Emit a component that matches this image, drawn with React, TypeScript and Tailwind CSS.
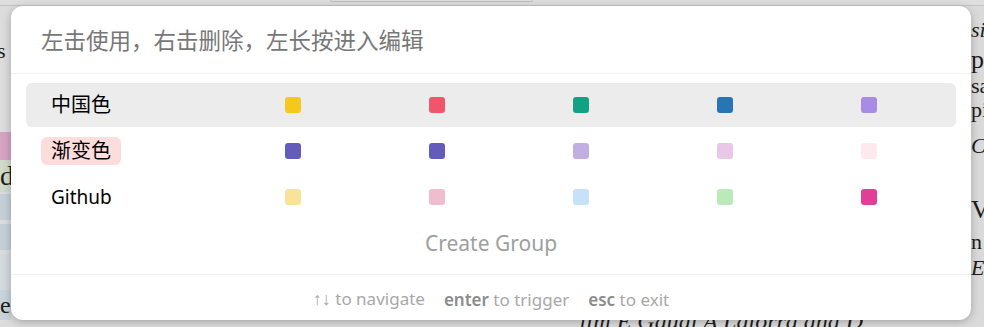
import React from "react";

const rows: { label: string; badge?: boolean; active?: boolean; latin?: boolean; colors: string[] }[] = [
  { label: "中国色", active: true, colors: ["#f4c91b", "#ef566a", "#12a283", "#2775b5", "#a78be4"] },
  { label: "渐变色", badge: true, colors: ["#645cbb", "#645cbb", "#c1afe3", "#ebc7e7", "#fde9ee"] },
  { label: "Github", latin: true, colors: ["#f9e29a", "#f0bdcf", "#c5e2f8", "#baeab7", "#e13f97"] },
];

function Swatch({ color }: { color: string }) {
  return <div className="h-4 w-4 rounded-[3px]" style={{ backgroundColor: color }} />;
}

export default function App() {
  return (
    <div className="relative h-[327px] w-[984px] overflow-hidden bg-[#dcdcdc] font-['Liberation_Serif',serif] text-[#1c1c1c]">
      {/* dimmed document behind */}
      <div className="flex h-[6px] border-b border-[#c4c4c4] bg-[#dedede]">
        <div className="ml-[330px] h-[2px] w-[203px] rounded-b-[4px] border border-t-0 border-[#bdbdbd]" />
      </div>
      <div className="flex h-[321px]">
        <div className="flex w-[11px] flex-col overflow-hidden text-[22px] leading-none">
          <div className="h-[34px] shrink-0" />
          <div className="h-[22px] shrink-0 -ml-[3px]">s</div>
          <div className="h-[70px] shrink-0" />
          <div className="h-[28px] shrink-0 bg-[#d7a3c3]" />
          <div className="h-[32px] shrink-0 bg-[#cfdacb] text-[28px] leading-[32px]">d</div>
          <div className="mt-[2px] h-[26px] shrink-0 bg-[#c4cfd9]" />
          <div className="mt-[4px] h-[26px] shrink-0 bg-[#c4cfd9]" />
          <div className="mt-[4px] h-[36px] shrink-0 bg-[#d2d9df]" />
          <div className="h-[30px] shrink-0 bg-[#c8d3dc] text-[24px] leading-[30px]">e</div>
        </div>
        <div className="flex-1" />
        <div className="flex w-[13px] flex-col overflow-hidden bg-[#dadada] text-[22px] leading-none">
          <div className="h-[13px] shrink-0" />
          <div className="h-[22px] shrink-0 italic">si</div>
          <div className="mt-[6px] h-[28px] shrink-0 text-[26px]">p</div>
          <div className="h-[22px] shrink-0">sa</div>
          <div className="mt-[2px] h-[22px] shrink-0">pi</div>
          <div className="mt-[14px] h-[22px] shrink-0 italic">Co</div>
          <div className="mt-[40px] h-[28px] shrink-0 text-[26px]">V</div>
          <div className="mt-[6px] h-[22px] shrink-0">n</div>
          <div className="mt-[4px] h-[22px] shrink-0 italic">E</div>
        </div>
      </div>
      <div className="absolute bottom-[-12px] left-[580px] whitespace-nowrap text-[24px] italic text-[#1c1c1c]">
        ttm E Gaudi A Laforra and D
      </div>

      {/* modal */}
      <div className="absolute left-[11px] top-[6px] flex w-[960px] flex-col rounded-[12px] bg-white font-['Noto_Sans','Noto_Sans_CJK_SC',sans-serif] shadow-[0_2px_8px_rgba(0,0,0,0.25)]">
        <div className="flex h-[67px] items-center px-[30px] font-['Noto_Sans_CJK_SC',sans-serif] text-[22.5px] text-[#777777]">
          左击使用，右击删除，左长按进入编辑
        </div>
        <div className="h-px bg-[#f1f1f1]" />
        <div className="flex flex-col gap-[2px] px-[15px] pt-[9px]">
          {rows.map((r) => (
            <div
              key={r.label}
              className={`grid h-[44px] grid-cols-[180px_repeat(5,1fr)] items-center rounded-[6px] px-[15px] ${r.active ? "bg-[#ececec]" : ""}`}
            >
              <div className="flex">
                <span
                  className={`rounded-[6px] px-[10px] leading-[28px] text-black ${r.latin ? "text-[19px]" : "text-[20px]"} ${r.badge ? "bg-[#fddcdc]" : ""}`}
                >
                  {r.label}
                </span>
              </div>
              {r.colors.map((c, i) => (
                <div key={i} className="flex justify-center">
                  <Swatch color={c} />
                </div>
              ))}
            </div>
          ))}
        </div>
        <div className="flex h-[50px] items-center justify-center text-[21px] text-[#9e9e9e]">Create Group</div>
        <div className="h-[5px]" />
        <div className="h-px bg-[#f1f1f1]" />
        <div className="flex h-[45px] items-center justify-center gap-[19px] pt-[4px] text-[17px] text-[#a8a8a8]">
          <span>
            <span className="font-['Liberation_Sans',sans-serif] text-[18px]">↑↓</span> to navigate
          </span>
          <span>
            <b className="font-semibold text-[#8c8c8c]">enter</b> to trigger
          </span>
          <span>
            <b className="font-semibold text-[#8c8c8c]">esc</b> to exit
          </span>
        </div>
      </div>
    </div>
  );
}
